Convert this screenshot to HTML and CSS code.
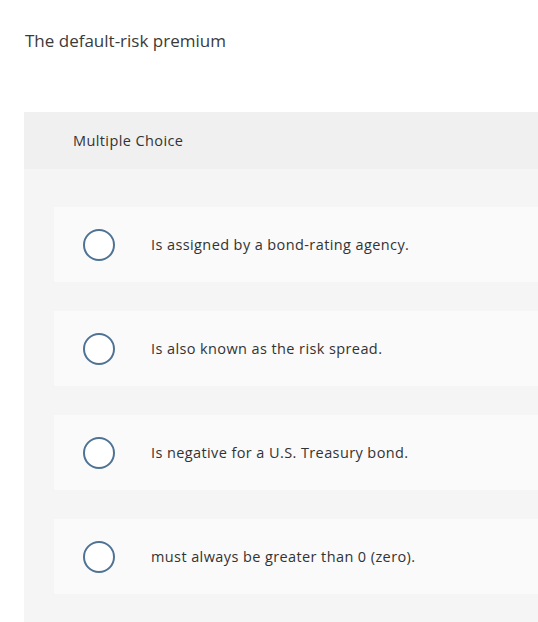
FILE: index.html
```html
<!DOCTYPE html>
<html>
<head>
<meta charset="utf-8">
<link rel="stylesheet" href="styles.css">
</head>
<body>
<p class="prompt">The default-risk premium</p>
<section class="panel">
  <div class="panel-head">Multiple Choice</div>
  <div class="panel-body">
    <label class="choice"><span class="radio"></span><span class="choice-text">Is assigned by a bond-rating agency.</span></label>
    <label class="choice"><span class="radio"></span><span class="choice-text">Is also known as the risk spread.</span></label>
    <label class="choice"><span class="radio"></span><span class="choice-text">Is negative for a U.S. Treasury bond.</span></label>
    <label class="choice"><span class="radio"></span><span class="choice-text">must always be greater than 0 (zero).</span></label>
  </div>
</section>
</body>
</html>
```
FILE: styles.css
```css
html, body {
  margin: 0;
  padding: 0;
  background: #ffffff;
}
body {
  font-family: "Open Sans", "Liberation Sans", sans-serif;
  color: #333333;
  overflow: hidden;
}
.prompt {
  margin: 0;
  padding: 29px 0 0 25px;
  height: 112px;
  box-sizing: border-box;
  font-size: 17px;
  line-height: 24px;
  color: #3a3a3a;
}
.panel {
  margin-left: 24px;
  background: #f5f5f5;
  height: 510px;
}
.panel-head {
  height: 57px;
  background: #f0f0f0;
  display: flex;
  align-items: center;
  padding-left: 49px;
  font-size: 14.5px;
  letter-spacing: 0.4px;
  color: #333;
}
.panel-body {
  padding: 38px 0 0 30px;
  display: flex;
  flex-direction: column;
  gap: 29px;
}
.choice {
  height: 75px;
  background: #fafafa;
  display: flex;
  align-items: center;
  padding-left: 29px;
  font-size: 14.5px;
  letter-spacing: 0.4px;
  color: #333;
}
.radio {
  width: 28px;
  height: 28px;
  border: 2px solid #4f7394;
  border-radius: 50%;
  background: #fff;
  flex: none;
}
.choice-text {
  margin-left: 36px;
}
```
